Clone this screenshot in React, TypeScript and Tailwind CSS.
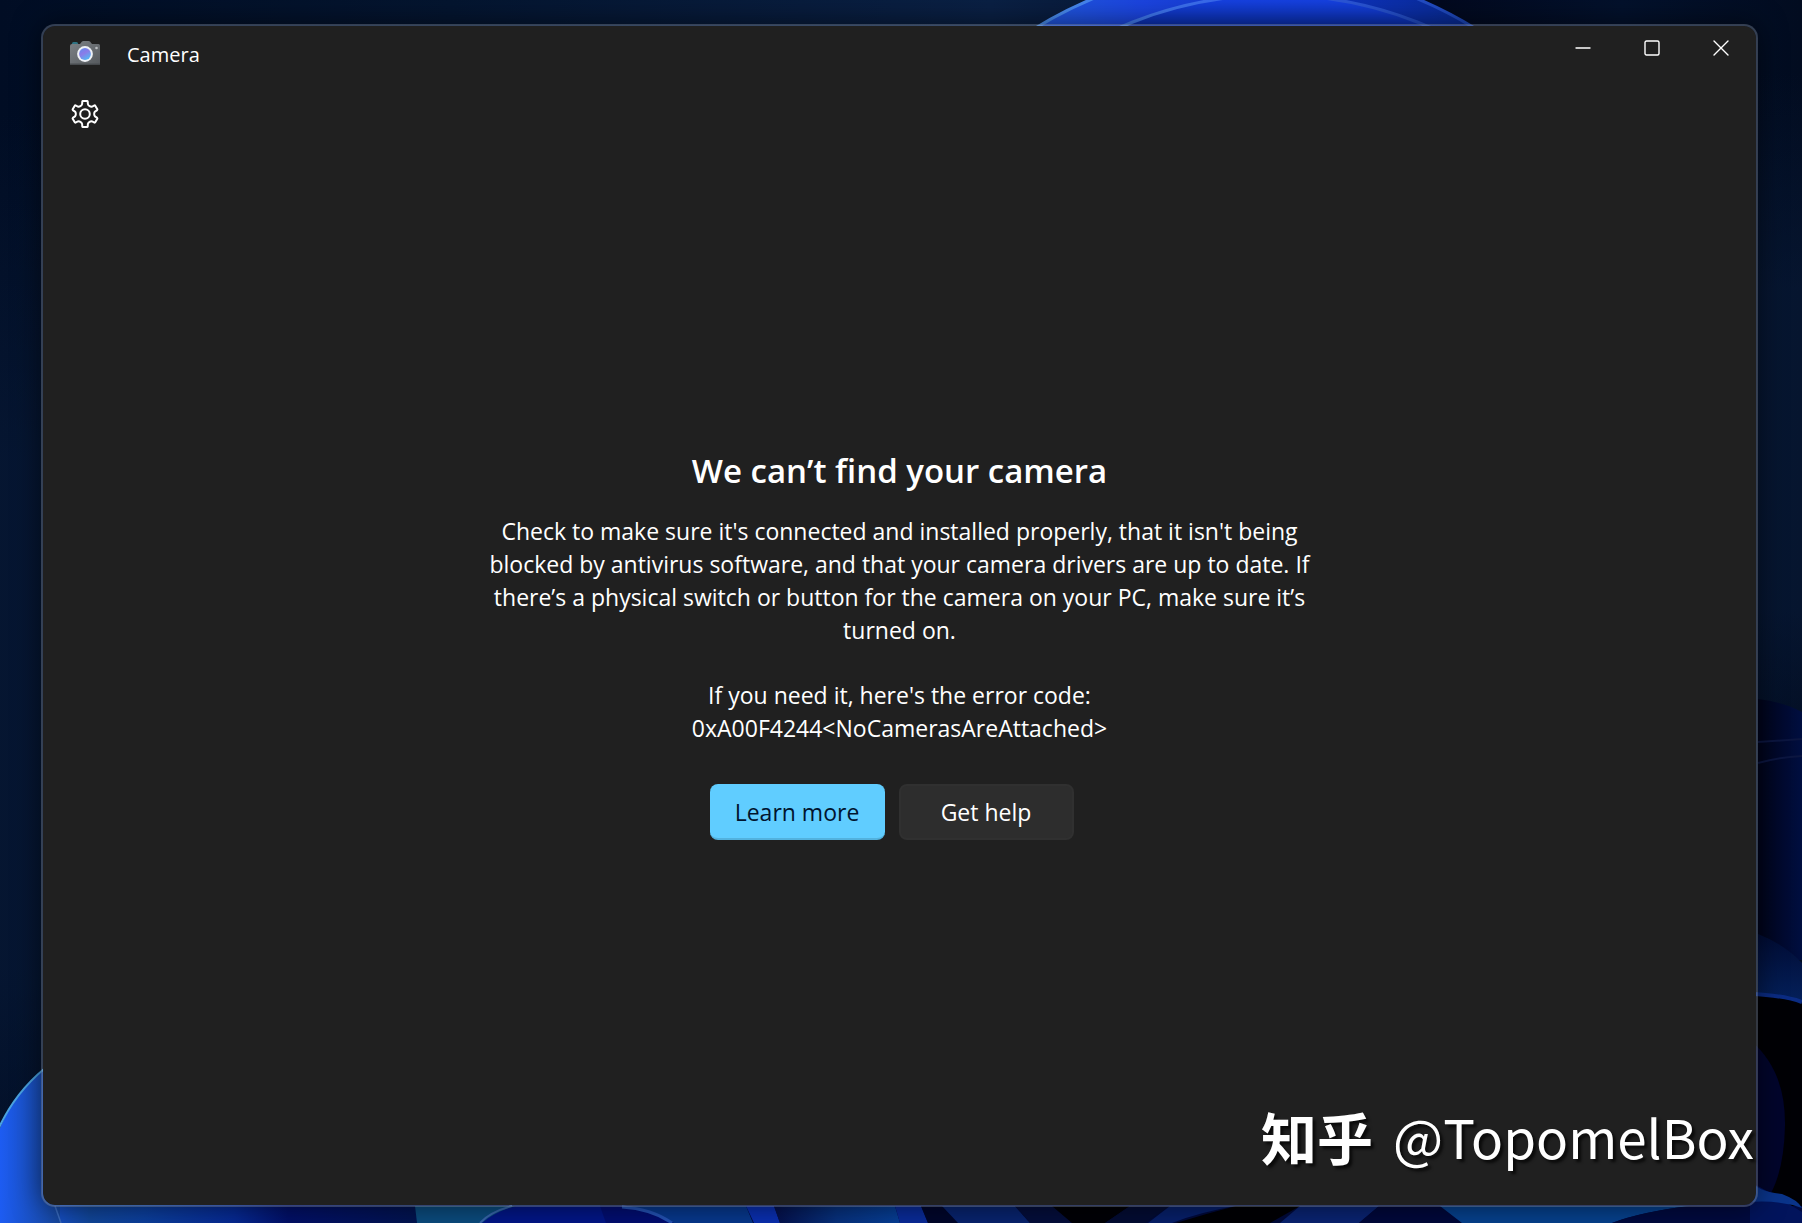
import type { ReactNode } from "react";

// Six-toothed gear, drawn around the origin
const gearPath = (() => {
  const at = (x: number, y: number, deg: number) => {
    const r = (deg * Math.PI) / 180;
    const px = x * Math.cos(r) - y * Math.sin(r);
    const py = x * Math.sin(r) + y * Math.cos(r);
    return `${px.toFixed(2)} ${py.toFixed(2)}`;
  };
  let d = `M${at(-2.9, -9.9, 0)}`;
  for (let i = 0; i < 6; i++) {
    const a = i * 60;
    d += `L${at(-2.7, -12.5, a)}Q${at(-2.6, -13, a)} ${at(-2.1, -13, a)}`;
    d += `L${at(2.1, -13, a)}Q${at(2.6, -13, a)} ${at(2.7, -12.5, a)}`;
    d += `L${at(2.9, -9.9, a)}`;
    d += `C${at(3.2, -8.4, a)} ${at(-3.2, -8.4, a + 60)} ${at(-2.9, -9.9, a + 60)}`;
  }
  return d + "Z";
})();

function GearIcon() {
  return (
    <svg viewBox="-15 -15 30 30" className="size-[30px]" fill="none" stroke="#fff" strokeWidth="2" strokeLinejoin="round">
      <path d={gearPath} />
      <circle r="4.8" />
    </svg>
  );
}

function CameraIcon() {
  return (
    <svg viewBox="0 0 32 26" className="h-[26px] w-8" aria-hidden="true">
      <defs>
        <linearGradient id="body" x1="0" y1="0" x2="1" y2="1">
          <stop offset="0" stopColor="#7d8287" />
          <stop offset="1" stopColor="#55595d" />
        </linearGradient>
        <linearGradient id="lens" x1="0" y1="0" x2="0.6" y2="1">
          <stop offset="0" stopColor="#5c8df0" />
          <stop offset="0.5" stopColor="#8b7be8" />
          <stop offset="1" stopColor="#55b4f2" />
        </linearGradient>
      </defs>
      <rect x="3" y="2" width="6" height="4" rx="1.5" fill="#2f7484" />
      <path d="M1 6Q1 4 3 4H11L13 1.600Q13.600 1 14.500 1H19.500Q20.400 1 21 1.600L23 4H29.500Q31 4 31 5.500V24.500H1Z" fill="url(#body)" />
      <path d="M1 23.500H31V24.700H1Z" fill="#484c50" />
      <circle cx="16" cy="14" r="7.900" fill="#eef1f6" />
      <circle cx="16" cy="14" r="5.900" fill="url(#lens)" />
      <circle cx="27.500" cy="8" r="1.300" fill="#b9bdc1" />
    </svg>
  );
}

function Wallpaper() {
  return (
    <svg className="absolute inset-0 size-full" viewBox="0 0 1802 1223" preserveAspectRatio="none" aria-hidden="true">
      <defs>
        <linearGradient id="sky" x1="0" y1="0" x2="1802" y2="0" gradientUnits="userSpaceOnUse">
          <stop offset="0" stopColor="#010d24" />
          <stop offset="0.25" stopColor="#041530" />
          <stop offset="0.55" stopColor="#0a2044" />
          <stop offset="0.8" stopColor="#02091f" />
          <stop offset="0.9" stopColor="#03112c" />
          <stop offset="1" stopColor="#020c20" />
        </linearGradient>
        <linearGradient id="side" x1="0" y1="0" x2="0" y2="1">
          <stop offset="0.1" stopColor="#0a1e3e" stopOpacity="0" />
          <stop offset="0.4" stopColor="#0a1e3e" stopOpacity="0.5" />
          <stop offset="0.85" stopColor="#0a1e3e" stopOpacity="0.5" />
          <stop offset="1" stopColor="#0a1e3e" stopOpacity="0.2" />
        </linearGradient>
        <linearGradient id="petal" x1="1033" y1="0" x2="1477" y2="0" gradientUnits="userSpaceOnUse">
          <stop offset="0" stopColor="#2158dc" />
          <stop offset="0.25" stopColor="#1b44e0" />
          <stop offset="0.7" stopColor="#0d32bc" />
          <stop offset="1" stopColor="#082a90" />
        </linearGradient>
        <linearGradient id="inner" x1="0" y1="0" x2="0" y2="26" gradientUnits="userSpaceOnUse">
          <stop offset="0" stopColor="#1641e2" />
          <stop offset="1" stopColor="#0a2fae" />
        </linearGradient>
        <linearGradient id="rim" x1="1033" y1="0" x2="1477" y2="0" gradientUnits="userSpaceOnUse">
          <stop offset="0" stopColor="#4a90f0" />
          <stop offset="0.5" stopColor="#3560ec" />
          <stop offset="1" stopColor="#1c46b8" />
        </linearGradient>
        <linearGradient id="corner" x1="0" y1="0" x2="60" y2="0" gradientUnits="userSpaceOnUse">
          <stop offset="0" stopColor="#1d5cf2" />
          <stop offset="1" stopColor="#17489e" />
        </linearGradient>
        <linearGradient id="strip" x1="0" y1="0" x2="1802" y2="0" gradientUnits="userSpaceOnUse">
          <stop offset="0" stopColor="#1b5af0" />
          <stop offset="0.03" stopColor="#164fc8" />
          <stop offset="0.05" stopColor="#11479c" />
          <stop offset="0.08" stopColor="#0c40a0" />
          <stop offset="0.13" stopColor="#062a96" />
          <stop offset="0.16" stopColor="#02106a" />
          <stop offset="0.23" stopColor="#021452" />
        </linearGradient>
        <linearGradient id="fold" x1="0" y1="0" x2="1" y2="0">
          <stop offset="0" stopColor="#04104c" />
          <stop offset="0.5" stopColor="#073280" />
          <stop offset="1" stopColor="#06409a" />
        </linearGradient>
        <linearGradient id="deep" x1="0" y1="0" x2="1" y2="0">
          <stop offset="0" stopColor="#01041a" />
          <stop offset="1" stopColor="#000e40" />
        </linearGradient>
        <linearGradient id="glow" x1="0" y1="0" x2="0" y2="1">
          <stop offset="0" stopColor="#010c34" />
          <stop offset="1" stopColor="#04205a" />
        </linearGradient>
      </defs>
      <rect width="1802" height="1223" fill="url(#sky)" />
      <rect width="42" height="1140" fill="url(#side)" />
      <rect x="1758" width="44" height="720" fill="url(#side)" />

      {/* Top bloom */}
      <circle cx="1255" cy="385" r="419" fill="url(#petal)" stroke="url(#rim)" strokeWidth="3" />
      <circle cx="1275" cy="383" r="388" fill="url(#inner)" stroke="url(#rim)" strokeWidth="3" />

      {/* Bottom edge */}
      <rect y="1195" width="1802" height="28" fill="#010a3c" />
      <rect y="1195" width="600" height="28" fill="url(#strip)" />
      <path d="M42 1070Q14 1094 0 1128V1223H60V1070Z" fill="url(#corner)" />
      <path d="M44 1069Q14 1094 -2 1130" fill="none" stroke="#4aa2e0" strokeWidth="2" />
      <path d="M55 1206L61 1223" stroke="#3a6cc0" strokeWidth="1.5" />
      <path d="M415 1206H516Q496 1212 488 1223H417Z" fill="#0b4d80" />
      <path d="M516 1206Q494 1212 482 1223H680L640 1206Z" fill="#02168a" />
      <path d="M512 1206Q490 1212 480 1223" fill="none" stroke="#3a68b0" strokeWidth="2" />
      <path d="M600 1206H640L675 1223H606Z" fill="#020e74" />
      <path d="M618 1206H746L753 1223H674Q650 1208 618 1206Z" fill="#073990" />
      <path d="M622 1207Q652 1209 672 1223" fill="none" stroke="#2454b8" strokeWidth="3" />
      <path d="M746 1206H774L780 1223H754Z" fill="#0a30b4" />
      <path d="M774 1206H895L900 1223H780Z" fill="url(#fold)" />
      <path d="M895 1206H921L928 1223H900Z" fill="#0a2c9c" />
      <path d="M921 1206H950L960 1223H928Z" fill="#01062c" />
      <path d="M942 1206H1015L1030 1223H958Z" fill="#082470" />
      <path d="M1015 1206H1060L1075 1223H1030Z" fill="#040e3c" />
      <path d="M1052 1206H1130L1105 1223H1072Z" fill="#000006" />
      <path d="M1130 1206H1170L1145 1223H1105Z" fill="#030c34" />
      <path d="M1170 1206H1236Q1200 1212 1172 1223H1148Z" fill="#07206c" />
      <path d="M1236 1206H1300L1270 1223H1176Q1205 1214 1236 1206Z" fill="#000004" />
      <path d="M1300 1206H1379L1359 1223H1280Z" fill="#0a2474" />
      <path d="M1379 1206H1462L1475 1223H1359Z" fill="#01083c" />
      <path d="M1440 1206H1690Q1640 1212 1612 1223H1462Z" fill="#064290" />
      <path d="M1690 1206Q1640 1212 1612 1223H1802V1190Z" fill="#010a40" />

      {/* Right edge */}
      <path d="M1758 699Q1784 702 1802 712V960H1758Z" fill="url(#deep)" />
      <path d="M1758 742L1802 739M1758 763Q1780 757 1802 756" fill="none" stroke="#0c1640" strokeWidth="2" />
      <path d="M1758 934Q1784 944 1802 963V1002L1758 994Z" fill="url(#glow)" />
      <path d="M1750 994Q1782 995 1802 1001V1206H1750Z" fill="#000005" />
      <path d="M1750 994Q1782 995 1802 1002" fill="none" stroke="#0b2c84" strokeWidth="4" />
      <path d="M1750 1040Q1786 1070 1785 1126Q1784 1170 1770 1195H1750Z" fill="#02052c" />
      <path d="M1750 1182Q1770 1192 1802 1212V1223H1750Z" fill="#02145c" />
      <path d="M1750 1180Q1758 1192 1782 1194Q1798 1200 1802 1208Q1780 1200 1750 1202Z" fill="#0a348a" />
    </svg>
  );
}

function CaptionButton({ label, children }: { label: string; children: ReactNode }) {
  return (
    <button type="button" aria-label={label} className="flex h-11 w-[69px] items-center justify-center hover:bg-white/10">
      <svg viewBox="0 0 16 16" className="size-4" fill="none" stroke="#fff" strokeWidth="1.4" strokeLinecap="round">
        {children}
      </svg>
    </button>
  );
}

export default function App() {
  return (
    <div className="relative flex min-h-screen flex-col overflow-hidden bg-[#020c20] pt-6 pr-11 pb-4 pl-[41px] font-['Open_Sans','Noto_Sans',sans-serif] text-white">
      <Wallpaper />

      <main className="relative flex flex-1 flex-col overflow-hidden rounded-[14px] border-2 border-[#7f8ca0]/40 bg-[#202020] bg-clip-padding shadow-[0_0_28px_rgba(0,0,0,0.55)]">
        <header className="flex items-start justify-between">
          <div className="flex items-start gap-[26px] pt-3 pl-[26px]">
            <div className="pt-0.5">
              <CameraIcon />
            </div>
            <h1 className="text-[20px] leading-[34px]">Camera</h1>
          </div>
          <div className="flex pr-px">
            <CaptionButton label="Minimize">
              <path d="M1 8H15" />
            </CaptionButton>
            <CaptionButton label="Maximize">
              <rect x="1" y="1" width="14" height="14" rx="1.5" />
            </CaptionButton>
            <CaptionButton label="Close">
              <path d="M1 1L15 15M15 1L1 15" />
            </CaptionButton>
          </div>
        </header>

        <button type="button" aria-label="Settings" className="mt-[18px] ml-[18px] flex size-12 items-center justify-center rounded-md hover:bg-white/10">
          <GearIcon />
        </button>

        <section className="mx-auto mt-[309px] flex w-full max-w-[850px] flex-col items-center text-center">
          <h2 className="text-[33px] leading-[48px] font-semibold">We can’t find your camera</h2>
          <p className="mt-5 text-[23px] leading-[33px]">
            Check to make sure it's connected and installed properly, that it isn't being blocked by antivirus
            software, and that your camera drivers are up to date. If there’s a physical switch or button for the
            camera on your PC, make sure it’s turned on.
          </p>
          <p className="mt-8 text-[23px] leading-[33px]">
            If you need it, here's the error code:
            <br />
            0xA00F4244&lt;NoCamerasAreAttached&gt;
          </p>
          <div className="mt-[39px] flex pr-0.5 text-[23px]">
            <button type="button" className="mr-[14px] h-14 w-[175px] rounded-lg border-y-2 border-t-[#60cdff] border-b-[#52b2de] bg-[#60cdff] text-[#00142e]">
              Learn more
            </button>
            <button type="button" className="mr-[14px] h-14 w-[175px] rounded-lg border-2 border-[#303030] bg-[#2d2d2d]">
              Get help
            </button>
          </div>
        </section>
      </main>

      <div className="absolute right-[48px] bottom-[41px] flex items-center gap-5 font-['Noto_Sans_CJK_SC',sans-serif] text-[53px] leading-[92px] whitespace-nowrap [text-shadow:3px_3px_3px_rgba(0,0,0,0.7)]">
        <span lang="zh-CN" className="text-[56px] font-bold">知乎</span>
        <span>@TopomelBox</span>
      </div>
    </div>
  );
}
